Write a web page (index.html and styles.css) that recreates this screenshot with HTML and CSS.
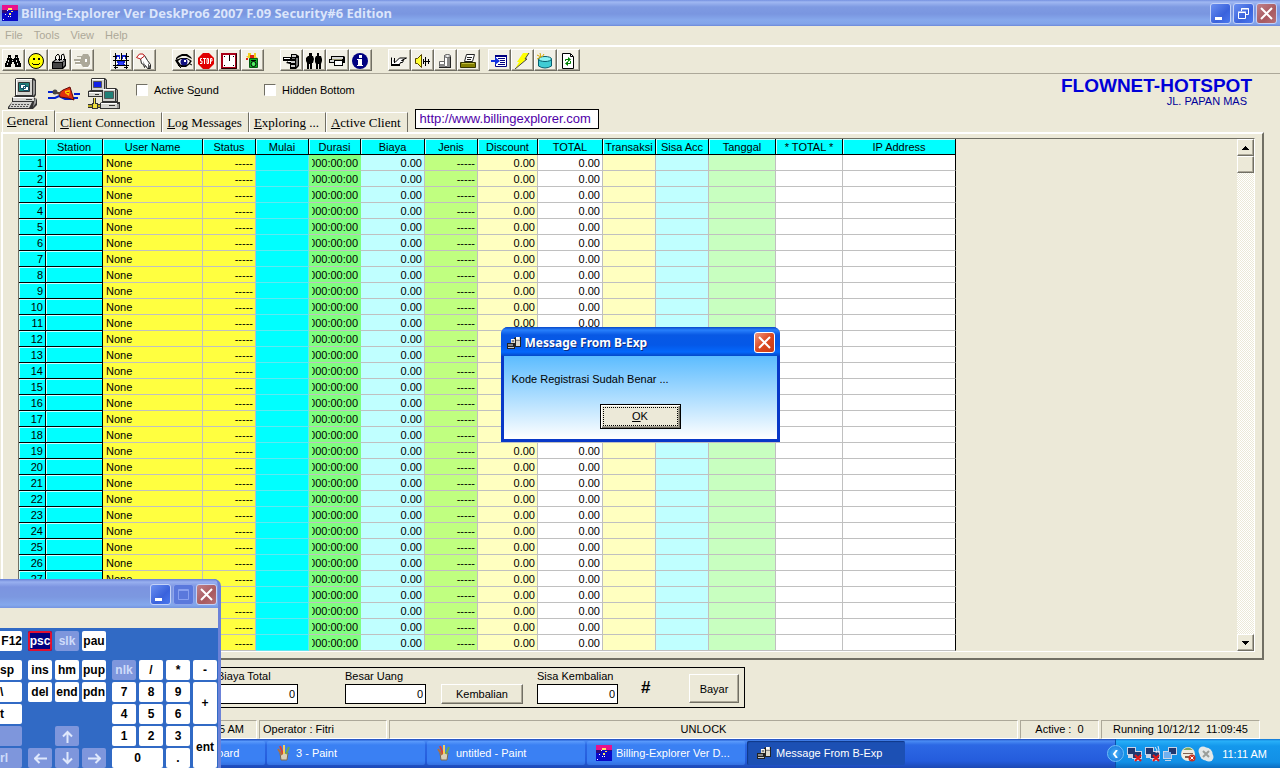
FILE: index.html
```html
<!DOCTYPE html>
<html lang="id">
<head>
    <meta charset="UTF-8">
    <meta name="viewport" content="width=device-width, initial-scale=1.0">
    <title>Billing-Explorer Ver DeskPro6 2007 F.09 Security#6 Edition</title>
    <link rel="stylesheet" href="styles.css">
</head>
<body>
    <svg class="icon-defs" aria-hidden="true">
        <symbol id="i-app" viewBox="0 0 16 16">
            <path fill="#0808c8" d="M0 0h16v16H0z"/>
            <path fill="#e8108c" d="M0 0h16v5H0z"/>
            <path fill="#300878" d="M0 5h5v3H0zM11 5h5v1h-5z"/>
            <path fill="#ffe860" d="M6 3h4v2H6zM9 6h2v1H9zM7 8h2v2H7z"/>
            <path fill="#fff" d="M5 5h1v1H5zM3 9h1v1H3zM6 11h1v1H6zM1 14h1v1H1zM8 11h1v1H8z"/>
        </symbol>
        <symbol id="i-station" viewBox="0 0 16 16">
            <path fill="#222" d="M1 8h7V3l2-1h5v10H9v2H1z"/>
            <path fill="#dcd8cc" d="M10 2h4v9h-4zM5 4h4v4H5z"/>
            <path fill="#888" d="M10 5h4v1h-4zM2 9h5v2H2zM6 5h2v2H6z"/>
            <path fill="#ccc" d="M2 12h6v1H2z"/>
            <path fill="#fff" d="M10 2h3v2h-3zM5 4h3v1H5z"/>
        </symbol>
        <symbol id="i-find" viewBox="0 0 16 16">
            <path d="M3 2h3v3h1v1h2V5h1V2h3v3h1v3h1v2h1v4h-6v-3H9V9H7v2H6v3H0v-4h1V8h1V5h1z"/>
            <path fill="#ddd" d="M4 4h1v1H4zM3 7h1v2H3zM2 10h1v2H2zM11 4h1v1h-1zM11 7h1v2h-1zM12 10h1v2h-1zM7 7h1v1H7z"/>
        </symbol>
        <symbol id="i-smile" viewBox="0 0 16 16">
            <circle cx="8" cy="8" r="7.500" fill="#ff0" stroke="#000"/>
            <path d="M5 5h2v2H5zM10 5h2v2h-2zM4 10h1v1H4zM5 11h6v1H5zM11 10h1v1h-1z"/>
        </symbol>
        <symbol id="i-lock" viewBox="0 0 16 16">
            <path d="M1 9l4-3h10v7l-3 3H1z"/>
            <path fill="#a8a8a8" d="M5 7h9l-3 2H3z"/>
            <path fill="#444" d="M2 10h9v5H2z"/>
            <path fill="#777" d="M12 9l2-1v4l-2 2z"/>
            <path d="M4.500 7V3.500L7 1l1.500 2v5M10.500 7V2l2-1 1 3v3" fill="none" stroke="#000"/>
            <path fill="#fff" d="M6 4h1v3H6zM11 3h1v4h-1z"/>
        </symbol>
        <symbol id="i-key" viewBox="0 0 16 16">
            <path fill="#fff" d="M10 2h5l2 3v8l-3 2h-4l-2-3H2V6h6z"/>
            <path fill="#aca899" d="M9 1h5l2 3v7l-2 3H9l-2-3H1V9h5V8H0V6h7V4H3V3h5zM11 6v3h2V6z" fill-rule="evenodd"/>
        </symbol>
        <symbol id="i-net" viewBox="0 0 16 16">
            <path fill="#1020d0" d="M3 2h4v4H3zM9 2h4v4H9zM4 7h8v6H4z"/>
            <path stroke="#000" fill="none" d="M0 3.500h4M12 3.500h4M0 7.500h16M0 12.500h16M2.500 0v16M13.500 0v16M8.500 0v8M1 14.500h4M11 14.500h4"/>
            <path fill="#fff" d="M4 4h2v2H4zM10 4h2v2h-2zM3 10h2v1H3zM11 10h2v1h-2z"/>
            <path fill="#2c3cff" d="M6 9h4v3H6z"/>
        </symbol>
        <symbol id="i-hand" viewBox="0 0 16 16">
            <path d="M4.500 5.500l4-3 3 5 3 4v4h-3l-2-3-1 2-1-3-2-1z" fill="#fff" stroke="#222"/>
            <path d="M12 10l3 5h-3zM7 8l2 4-1 1z" fill="#555"/>
            <path d="M.5 4.500l3-3.500H7l1.500 2-4 3z" fill="#fff" stroke="#c01818"/>
        </symbol>
        <symbol id="i-eye" viewBox="0 0 18 16">
            <path d="M1 5l2-2 4-2h5l4 3 1 2-2-1-4-2H7L3 5l-2 2z"/>
            <path d="M0 7l6-2h6l5 3-1 1-1 2-4 3H6l-3-2-2-3z"/>
            <path fill="#fff" d="M3 8l3-2h6l3 2-2 3-3 1H6z"/>
            <circle cx="9" cy="9" r="3.500" fill="#101080"/>
            <path fill="#fff" d="M9 7h2v2H9z"/>
            <path d="M3 12l3 3M15 11l2 1" stroke="#000"/>
        </symbol>
        <symbol id="i-stop" viewBox="0 0 16 16">
            <path fill="#e00000" d="M5 0h6l5 5v6l-5 5H5l-5-5V5z"/>
            <path fill="none" stroke="#fff" d="M4 5.500H2.500v2.500H4v2.500H2M5 5.500h3M6.500 5.500V11M9 5.500h1.500v5H9zM12.500 11V5.500H14V8h-1"/>
        </symbol>
        <symbol id="i-clock" viewBox="0 0 16 16">
            <path fill="#fff" stroke="#a80018" stroke-width="2" d="M1 1h14v14H1z"/>
            <path d="M8.500 2v6" stroke="#000"/>
            <path fill="#000" d="M3 3h1v1H3zM12 3h1v1h-1zM3 12h1v1H3zM12 12h1v1h-1z"/>
            <path fill="none" stroke="#200" d="M.5 15.500h15V.5"/>
        </symbol>
        <symbol id="i-light" viewBox="0 0 16 16">
            <path fill="#10b020" stroke="#065a10" d="M5.500 5.500h8v9h-8z"/>
            <path fill="#f0d020" d="M4 0h3v2h3V0h2v4l2 1H4L2 3h2z"/>
            <path fill="#e02010" d="M6 2h4v3H6zM2 5h2v2H2z"/>
            <circle cx="9.500" cy="11" r="2.500" fill="#50f060" stroke="#000"/>
            <path d="M7 7h5v1H7z"/>
        </symbol>
        <symbol id="i-cabinet" viewBox="0 0 16 16">
            <path d="M8 1h5l3 2v10l-3 3H7v-5l-4-1 2-2H0V4h8z"/>
            <path fill="#ccc" d="M9 2h4v2H9zM8 12h4v2H8zM8 8h4v2H8z"/>
            <path fill="#fff" d="M1 5h6v1H1zM5 8h3v1H5z"/>
            <path fill="#777" d="M13 5h2v7l-2 2zM9 5h3v1H9z"/>
        </symbol>
        <symbol id="i-people" viewBox="0 0 16 16">
            <path d="M3 0h3v3h1l1 3-1 4H6v6H4v-5H3v5H1v-6L0 8V5l2-2h1zM11 0h2v3h2l1 3v2l-1 3v5h-2v-5h-1v5h-2v-5L9 9V5l1-2h1z"/>
        </symbol>
        <symbol id="i-printer" viewBox="0 0 16 16">
            <path d="M2 3h13l1 1v6h-2v3H5v-3H0V6h2z"/>
            <path fill="#d8d8d8" d="M3 4h11v2H3zM1 7h4v2H1z"/>
            <path fill="#fff" d="M6 8h7v4H6z"/>
            <path fill="#999970" d="M3 6h10v1H3z"/>
        </symbol>
        <symbol id="i-info" viewBox="0 0 16 16">
            <circle cx="8" cy="8" r="8" fill="#000080"/>
            <path fill="#fff" d="M7 2h3v3H7zM6 6h4v6h1v1H5v-1h1V7H5V6z"/>
        </symbol>
        <symbol id="i-point" viewBox="0 0 16 16">
            <path fill="#fff" stroke="#000" d="M.5 4.500v7h8l1-2h2l1-2h-2l5-2.500h-7l-4 4-2-1"/>
            <path d="M0 11h9v2H0zM3 5h1v5H3z"/>
        </symbol>
        <symbol id="i-sound" viewBox="0 0 16 16">
            <path fill="#ffff30" stroke="#554400" d="M1.500 5.500h2l4-4v13l-4-4h-2z"/>
            <path d="M9.500 6v5M11.500 4v9M14.500 6v5M9 8.500h7" stroke="#000"/>
        </symbol>
        <symbol id="i-bin" viewBox="0 0 16 16">
            <path fill="#fff" stroke="#666" d="M7.500 2.500h5v11h-5zM2.500 8.500h5v5h-5z"/>
            <path fill="#888" d="M10 5h3v9h-3zM3 11h5v3H3z"/>
            <path fill="#222" d="M13 3h1v12H2v-1h11z"/>
            <ellipse cx="10.500" cy="3" rx="3" ry="1.500" fill="#eee" stroke="#555"/>
        </symbol>
        <symbol id="i-tray" viewBox="0 0 16 16">
            <path fill="#fff" stroke="#222" d="M6.500 1.500h8l-2 7h-8z"/>
            <path d="M7 4.500h5M7 6.500h4" stroke="#222"/>
            <path fill="#848000" stroke="#333300" d="M.5 9.500h15v5H.5z"/>
            <path fill="#c0bc40" d="M2 10h12v1H2z"/>
        </symbol>
        <symbol id="i-list" viewBox="0 0 16 16">
            <path fill="#fff" stroke="#000080" d="M4.500 2.500h11v11h-11z"/>
            <path fill="#000080" d="M4 2h12v2H4zM7 5h7v1H7zM9 7h5v1H9zM9 9h5v1H9zM7 11h7v1H7z"/>
            <path fill="#1030e0" d="M0 7h4V4l5 4-5 4V9H0z"/>
        </symbol>
        <symbol id="i-bolt" viewBox="0 0 16 16">
            <path fill="#ff0" d="M9 0h6l-4 6h2L1 16l4-7H3z"/>
            <path d="M15 0l-4 6h2L1 16" fill="none" stroke="#444"/>
        </symbol>
        <symbol id="i-db" viewBox="0 0 16 16">
            <path fill="#40ccd4" stroke="#086070" d="M1.500 6v7q6.500 4 13 0V6z"/>
            <ellipse cx="8" cy="6" rx="6.500" ry="2.500" fill="#90f4f4" stroke="#086070"/>
            <path d="M0 2l4 2M3 0l1 4M7 1L5 4M0 6l4-2" stroke="#d8a800"/>
        </symbol>
        <symbol id="i-reload" viewBox="0 0 16 16">
            <path fill="#fff" stroke="#000" d="M2.500.5h8l3 3v12h-11z"/>
            <path d="M10.500 1v2.500H13" fill="none" stroke="#000"/>
            <path d="M5.500 8V6.500H9M10.500 8v2.500H7" fill="none" stroke="#008000"/>
            <path fill="#008000" d="M8 4l3 2.500L8 9zM8 8v5l-3-2.500z"/>
        </symbol>
        <symbol id="i-pc" viewBox="0 0 32 32">
            <path fill="#333" d="M7 1l2-1h17l2 2v15l-2 3h2l1 2v5l-4 4H0v-2l4-5v-4l3-2z"/>
            <path fill="#d4d4d0" d="M8 2h16v15H8zM5 19h21v4H5zM4 24h20l-3 6H1z"/>
            <path fill="#9a9a98" d="M25 2l2 1v13l-2 2zM27 20h1v5l-3 4z"/>
            <path fill="#fff" d="M8 1h16v1H8zM5 19h20v1H5zM8 2h1v15H8z"/>
            <path fill="#208078" stroke="#333" d="M10.500 4.500h11v9h-11z"/>
            <path fill="#fff" stroke="#105068" d="M12.500 6.500h5v4h-5zM15.500 8.500h5v4h-5z"/>
            <path fill="#444" d="M18 21h6v1h-6z"/>
            <path stroke="#555" stroke-dasharray="2 1" d="M4 26.500h17M3 28.500h17"/>
        </symbol>
        <symbol id="i-hero" viewBox="0 0 32 16">
            <path fill="none" stroke="#0020d0" stroke-width="2" d="M0 6h6M0 12h7l4-2 6 3h6l3-1h4M26 8h6"/>
            <path fill="#e03010" stroke="#600808" d="M11 7l4-3 7-3 4 13-6-2-8-1z"/>
            <path fill="#ffc800" d="M17 5l5-1-1 6-4-3z"/>
            <path fill="#d82000" d="M18 6h3v1h-2z"/>
            <circle cx="7" cy="6" r="2.500" fill="#444"/>
            <path fill="#604030" d="M9 6h4l-1 3-3-1z"/>
        </symbol>
        <symbol id="i-pcs" viewBox="0 0 32 32">
            <path fill="#333" d="M3 1l1-1h13l2 2v10h2v7H0v-6l3-1zM14 11l1-1h13l2 2v12h2v7H12v-6l2-1z"/>
            <path fill="#d4d4d0" d="M4 1h12v11H4zM1 14h13v4H1zM15 11h12v12H15zM13 25h16v5H13z"/>
            <path fill="#fff" d="M4 1h12v1H4zM1 14h12v1H1zM15 11h12v1H15zM13 25h16v1H13z"/>
            <path fill="#9a9a98" d="M17 2h1v9h-1zM28 12h1v11h-1zM29 26h2v4h-2z"/>
            <path fill="#1020e8" stroke="#555" d="M5.500 3.500h8v6h-8z"/>
            <path fill="#208078" stroke="#555" d="M16.500 13.500h9v7h-9z"/>
            <path fill="#333" d="M21 27h6v1h-6zM7 16h4v1H7z"/>
            <path stroke="#333" stroke-width="3" d="M6.500 20v7"/>
            <path fill="#333" d="M0 26h4v-1h6v1h2v4h-2v1H4v-1H0z"/>
            <path fill="#f0e040" d="M6 20h1v6H6zM5 26h4v4H5z"/>
            <path fill="#b8a820" d="M0 27h4v2H0zM10 27h2v2h-2z"/>
        </symbol>
        <symbol id="i-paint" viewBox="0 0 16 16">
            <path fill="#d8d0b8" stroke="#7a6a50" d="M4 8h8l-1 7H5z"/>
            <path stroke="#e04030" stroke-width="2" d="M4 1l3 8"/>
            <path stroke="#f0d060" stroke-width="2" d="M8 0v9"/>
            <path stroke="#70a850" stroke-width="2" d="M13 2l-3 7"/>
            <path stroke="#b07040" stroke-width="2" d="M2 4l4 6"/>
        </symbol>
        <symbol id="i-traynet" viewBox="0 0 16 16">
            <path fill="#c8d4e8" d="M1 1h9v8H1zM6 5h10v8H6z"/>
            <path fill="#203870" d="M2 2h7v6H2zM7 6h8v6H7z"/>
            <path fill="#c8d4e8" d="M8 13h6v2H8zM2 9h4v3H2z"/>
        </symbol>
        <symbol id="i-cross" viewBox="0 0 16 16">
            <path d="M9 9l6 6M15 9l-6 6" stroke="#e01818" stroke-width="2"/>
        </symbol>
    </svg>

    <header class="titlebar">
        <svg class="icon16"><use href="#i-app"/></svg>
        <h1>Billing-Explorer Ver DeskPro6 2007 F.09 Security#6 Edition</h1>
        <div class="win-buttons">
            <button type="button" class="win-btn" aria-label="Minimize"><svg viewBox="0 0 19 19"><path fill="#fff" d="M4 13h7v3H4z"/></svg></button>
            <button type="button" class="win-btn" aria-label="Restore"><svg viewBox="0 0 19 19"><path fill="none" stroke="#fff" d="M7.500 7V4.500h7v6H12M4.500 8.500h7v6h-7zM4 8h8M7 5h8"/></svg></button>
            <button type="button" class="win-btn close" aria-label="Close"><svg viewBox="0 0 19 19"><path stroke="#fff" stroke-width="2" d="M4 4l11 11M15 4L4 15"/></svg></button>
        </div>
    </header>

    <nav class="menubar">
        <a href="#">File</a>
        <a href="#">Tools</a>
        <a href="#">View</a>
        <a href="#">Help</a>
    </nav>

    <div class="toolbar">
        <div class="tool-group">
            <button type="button" aria-label="Find"><svg><use href="#i-find"/></svg></button>
            <button type="button" aria-label="User"><svg><use href="#i-smile"/></svg></button>
            <button type="button" aria-label="Lock"><svg><use href="#i-lock"/></svg></button>
            <button type="button" aria-label="Key" disabled><svg><use href="#i-key"/></svg></button>
        </div>
        <div class="tool-group">
            <button type="button" aria-label="Network"><svg><use href="#i-net"/></svg></button>
            <button type="button" aria-label="Select"><svg><use href="#i-hand"/></svg></button>
        </div>
        <div class="tool-group">
            <button type="button" aria-label="Monitor"><svg class="wide"><use href="#i-eye"/></svg></button>
            <button type="button" aria-label="Stop"><svg><use href="#i-stop"/></svg></button>
            <button type="button" aria-label="Time"><svg><use href="#i-clock"/></svg></button>
            <button type="button" aria-label="Traffic"><svg><use href="#i-light"/></svg></button>
        </div>
        <div class="tool-group">
            <button type="button" aria-label="Cabinet"><svg><use href="#i-cabinet"/></svg></button>
            <button type="button" aria-label="Members"><svg><use href="#i-people"/></svg></button>
            <button type="button" aria-label="Print"><svg><use href="#i-printer"/></svg></button>
            <button type="button" aria-label="Info"><svg><use href="#i-info"/></svg></button>
        </div>
        <div class="tool-group">
            <button type="button" aria-label="Point"><svg><use href="#i-point"/></svg></button>
            <button type="button" aria-label="Sound"><svg><use href="#i-sound"/></svg></button>
            <button type="button" aria-label="Storage"><svg><use href="#i-bin"/></svg></button>
            <button type="button" aria-label="Documents"><svg><use href="#i-tray"/></svg></button>
        </div>
        <div class="tool-group">
            <button type="button" aria-label="List"><svg><use href="#i-list"/></svg></button>
            <button type="button" aria-label="Quick"><svg><use href="#i-bolt"/></svg></button>
            <button type="button" aria-label="Database"><svg><use href="#i-db"/></svg></button>
            <button type="button" aria-label="Refresh"><svg><use href="#i-reload"/></svg></button>
        </div>
    </div>

    <div class="infobar">
        <div class="big-icons">
            <svg class="icon32"><use href="#i-pc"/></svg>
            <svg class="icon-hero"><use href="#i-hero"/></svg>
            <svg class="icon32"><use href="#i-pcs"/></svg>
        </div>
        <label class="check"><input type="checkbox"><span>Active S<u>o</u>und</span></label>
        <label class="check"><input type="checkbox"><span>Hidden Bottom</span></label>
        <div class="brand">
            <h2>FLOWNET-HOTSPOT</h2>
            <p>JL. PAPAN MAS</p>
        </div>
    </div>

    <div class="tabs">
        <button type="button" class="tab active"><u>G</u>eneral</button>
        <button type="button" class="tab"><u>C</u>lient Connection</button>
        <button type="button" class="tab"><u>L</u>og Messages</button>
        <button type="button" class="tab"><u>E</u>xploring ...</button>
        <button type="button" class="tab"><u>A</u>ctive Client</button>
        <a class="site-link" href="#">http://www.billingexplorer.com</a>
    </div>

    <main class="panel">
        <div class="grid-box">
            <table class="billing">
                <colgroup>
                    <col class="w-no"><col class="w-station"><col class="w-user"><col class="w-s"><col class="w-s">
                    <col class="w-durasi"><col class="w-biaya"><col class="w-s"><col class="w-disc"><col class="w-total">
                    <col class="w-s"><col class="w-s"><col class="w-m"><col class="w-m"><col class="w-ip">
                </colgroup>
                <thead>
                    <tr>
                        <th></th><th>Station</th><th>User Name</th><th>Status</th><th>Mulai</th>
                        <th>Durasi</th><th>Biaya</th><th>Jenis</th><th>Discount</th><th>TOTAL</th>
                        <th>Transaksi</th><th>Sisa Acc</th><th>Tanggal</th><th>* TOTAL *</th><th>IP Address</th>
                    </tr>
                </thead>
                <tbody id="rows"></tbody>
            </table>
            <div class="scrollbar">
                <button type="button" class="scroll-btn" aria-label="Scroll up"><svg viewBox="0 0 7 4"><path d="M3 0h1v1h1v1h1v1h1v1H0V3h1V2h1V1h1z"/></svg></button>
                <div class="scroll-thumb"></div>
                <button type="button" class="scroll-btn down" aria-label="Scroll down"><svg viewBox="0 0 7 4"><path d="M0 0h7v1H6v1H5v1H4v1H3V3H2V2H1V1H0z"/></svg></button>
            </div>
        </div>
    </main>

    <form class="payment">
        <div class="field">
            <label for="biaya">Biaya Total</label>
            <input type="text" id="biaya" value="0">
        </div>
        <div class="field uang">
            <label for="uang">Besar Uang</label>
            <input type="text" id="uang" value="0">
        </div>
        <button type="button" class="btn kembalian">Kembalian</button>
        <div class="field">
            <label for="sisa">Sisa Kembalian</label>
            <input type="text" id="sisa" value="0">
        </div>
        <span class="hash">#</span>
        <button type="button" class="btn bayar">Bayar</button>
    </form>

    <footer class="statusbar">
        <span class="st-time">11:09:45 AM</span>
        <span class="st-op">Operator : Fitri</span>
        <span class="st-main">UNLOCK</span>
        <span class="st-active">Active :&nbsp; 0</span>
        <span class="st-run">Running 10/12/12&nbsp; 11:09:45</span>
    </footer>

    <div class="taskbar">
        <button type="button" class="task"><svg class="icon16"><use href="#i-station"/></svg><span>On-Screen Keyboard</span></button>
        <button type="button" class="task"><svg class="icon16"><use href="#i-paint"/></svg><span>3 - Paint</span></button>
        <button type="button" class="task"><svg class="icon16"><use href="#i-paint"/></svg><span>untitled - Paint</span></button>
        <button type="button" class="task"><svg class="icon16"><use href="#i-app"/></svg><span>Billing-Explorer Ver D...</span></button>
        <button type="button" class="task current"><svg class="icon16"><use href="#i-station"/></svg><span>Message From B-Exp</span></button>
        <div class="tray">
            <button type="button" class="tray-toggle" aria-label="Show hidden icons"><svg viewBox="0 0 8 8"><path fill="none" stroke="#fff" stroke-width="2" d="M5 0L2 4l3 4"/></svg></button>
            <svg class="icon16"><use href="#i-traynet"/><use href="#i-cross"/></svg>
            <svg class="icon16"><use href="#i-traynet"/><path d="M11 1l2 3-1 3M14 0l1 4-1 3" fill="none" stroke="#dde8f8"/><use href="#i-cross"/></svg>
            <svg class="icon16" viewBox="0 0 16 16"><path fill="#c8d4e8" d="M6 1h9v8H6zM1 5h9v8H1zM3 14h6v1H3z"/><path fill="#203870" d="M7 2h7v6H7z"/><path fill="#70b0f0" d="M2 6h7v6H2z"/></svg>
            <svg class="icon16" viewBox="0 0 16 16"><circle cx="8" cy="8" r="7" fill="#f0ece0"/><path fill="#80a860" d="M3 4q5-5 10 0z"/><path fill="#806050" d="M3 7h10v1H3zM5 10h4v2H5z"/><circle cx="12" cy="12" r="3.500" fill="#c83020"/><path stroke="#fff" d="M10.500 10.500l3 3M13.500 10.500l-3 3"/></svg>
            <svg class="icon16" viewBox="0 0 16 16"><circle cx="5" cy="5" r="4.500" fill="#e4e8e8"/><circle cx="11" cy="11" r="4.500" fill="#e4e8e8"/><circle cx="8" cy="8" r="6.500" fill="#e4e8e8"/><path stroke="#9a9e9a" stroke-width="2" d="M5 5l6 6M11 5l-6 6"/></svg>
            <span class="clock">11:11 AM</span>
        </div>
    </div>

    <section class="dialog" role="dialog" aria-labelledby="dialogTitle">
        <div class="dialog-title">
            <svg class="icon16"><use href="#i-station"/></svg>
            <h2 id="dialogTitle">Message From B-Exp</h2>
            <button type="button" class="win-btn close" aria-label="Close"><svg viewBox="0 0 19 19"><path stroke="#fff" stroke-width="2" d="M4 4l11 11M15 4L4 15"/></svg></button>
        </div>
        <div class="dialog-body">
            <p>Kode Registrasi Sudah Benar ...</p>
            <button type="button" class="ok-btn"><span><u>O</u>K</span></button>
        </div>
    </section>

    <section class="keyboard" aria-label="Keyboard">
        <div class="keyboard-title">
            <button type="button" class="win-btn" aria-label="Minimize"><svg viewBox="0 0 19 19"><path fill="#fff" d="M4 13h7v3H4z"/></svg></button>
            <button type="button" class="win-btn off" aria-label="Maximize" disabled><svg viewBox="0 0 19 19"><path fill="none" stroke="#88a0f0" d="M4.500 4.500h10v10h-10zM4 5.500h11"/></svg></button>
            <button type="button" class="win-btn close" aria-label="Close"><svg viewBox="0 0 19 19"><path stroke="#fff" stroke-width="2" d="M4 4l11 11M15 4L4 15"/></svg></button>
        </div>
        <div class="keyboard-menu"></div>
        <div class="keys">
            <div class="key-block edge">
                <button type="button" class="right">F12</button>
                <button type="button">sp</button>
                <button type="button">\</button>
                <button type="button">t</button>
                <button type="button" class="mod" aria-label="Shift"></button>
                <button type="button" class="mod">rl</button>
            </div>
            <div class="key-block nav">
                <button type="button" class="hot">psc</button>
                <button type="button" class="mod">slk</button>
                <button type="button">pau</button>
                <button type="button">ins</button>
                <button type="button">hm</button>
                <button type="button">pup</button>
                <button type="button">del</button>
                <button type="button">end</button>
                <button type="button">pdn</button>
                <button type="button" class="mod up" aria-label="Up"><svg viewBox="0 0 13 13"><path d="M6.500 13V2M2 6.500L6.500 2 11 6.500"/></svg></button>
                <button type="button" class="mod arrow" aria-label="Left"><svg viewBox="0 0 13 13"><path d="M13 6.500H1M5.500 2L1 6.500 5.500 11"/></svg></button>
                <button type="button" class="mod arrow" aria-label="Down"><svg viewBox="0 0 13 13"><path d="M6.500 0v11M2 6.500L6.500 11 11 6.500"/></svg></button>
                <button type="button" class="mod arrow" aria-label="Right"><svg viewBox="0 0 13 13"><path d="M0 6.500h12M7.500 2L12 6.500 7.500 11"/></svg></button>
            </div>
            <div class="key-block num">
                <button type="button" class="mod">nlk</button>
                <button type="button">/</button>
                <button type="button">*</button>
                <button type="button">-</button>
                <button type="button">7</button>
                <button type="button">8</button>
                <button type="button">9</button>
                <button type="button" class="tall">+</button>
                <button type="button">4</button>
                <button type="button">5</button>
                <button type="button">6</button>
                <button type="button">1</button>
                <button type="button">2</button>
                <button type="button">3</button>
                <button type="button" class="tall">ent</button>
                <button type="button" class="double">0</button>
                <button type="button">.</button>
            </div>
        </div>
    </section>

    <script src="script.js"></script>
</body>
</html>
```
FILE: styles.css
```css
:root {
    --face: #ece9d8;
    --shadow: #aca899;
    --dark: #716f64;
    --line: #c0c0c0;
    --cyan: #00ffff;
    --task: #3a80f3;
}

* {
    margin: 0;
    padding: 0;
    box-sizing: border-box;
}

body {
    height: 100vh;
    display: flex;
    flex-direction: column;
    position: relative;
    overflow: hidden;
    background-color: var(--face);
    color: #000;
    font-family: "Liberation Sans", Arial, sans-serif;
    font-size: 11px;
    line-height: 14px;
}

button,
input {
    font: inherit;
    color: inherit;
}

button {
    border: none;
    background: none;
}

a {
    color: inherit;
    text-decoration: none;
}

svg {
    display: block;
    flex: none;
}

.icon-defs {
    position: absolute;
    width: 0;
    height: 0;
}

.icon16 {
    width: 16px;
    height: 16px;
}

/* Window title */
.titlebar {
    height: 26px;
    flex: none;
    display: flex;
    align-items: center;
    padding: 0 3px 0 2px;
    gap: 3px;
    background: linear-gradient(#7591e0 0, #a0b8f2 2px, #7e9ae2 7px, #7a96e0 14px, #86a8ec 20px, #82a4ea 24px, #6c88d8 100%);
}

.titlebar h1 {
    flex: 1;
    font-family: "Noto Sans", sans-serif;
    font-size: 13px;
    font-weight: bold;
    line-height: 16px;
    color: #dbe5fb;
    white-space: nowrap;
}

.win-buttons {
    display: flex;
    gap: 2px;
}

.win-btn {
    width: 21px;
    height: 21px;
    border: 1px solid #c4d2f8;
    border-radius: 3px;
    background: linear-gradient(135deg, #6a8ff0, #3a62dc 60%, #4a78ee);
}

.win-btn svg {
    width: 19px;
    height: 19px;
}

.win-btn.close {
    background: linear-gradient(135deg, #c08088, #a85a60 60%, #b87078);
}

.win-btn.off {
    border-color: #8ea4ec;
    background: #5a78dc;
}

/* Menu */
.menubar {
    height: 19px;
    flex: none;
    display: flex;
    align-items: center;
    gap: 11px;
    padding: 0 0 2px 5px;
    color: var(--shadow);
}

/* Toolbar */
.toolbar {
    flex: none;
    display: flex;
    height: 29px;
    padding: 2px 0 0 2px;
    border-top: 2px solid #fff;
    border-bottom: 1px solid var(--shadow);
}

.tool-group {
    display: flex;
    margin-right: 16px;
}

.tool-group:nth-child(5) {
    margin-right: 8px;
}

.tool-group button {
    width: 23px;
    height: 22px;
    padding: 2px 2px 1px;
    border: 1px solid;
    border-color: #fff var(--dark) var(--dark) #fff;
    background-color: #f2f0e6;
    box-shadow: inset -1px -1px 0 var(--shadow);
}

.tool-group svg {
    width: 16px;
    height: 16px;
}

.tool-group svg.wide {
    width: 18px;
}

/* Station icons and options */
.infobar {
    height: 35px;
    flex: none;
    display: flex;
    align-items: flex-start;
    padding: 2px 28px 0 8px;
}

.big-icons {
    display: flex;
    align-items: center;
    gap: 8px;
    padding-top: 2px;
    width: 128px;
}

.icon32 {
    width: 32px;
    height: 32px;
}

.icon-hero {
    width: 32px;
    height: 16px;
}

.check {
    display: flex;
    align-items: center;
    gap: 6px;
    width: 128px;
    padding-top: 7px;
}

.check input {
    appearance: none;
    width: 12px;
    height: 12px;
    background-color: #fff;
    border: 1px solid;
    border-color: var(--dark) #fff #fff var(--dark);
}

.brand {
    flex: 1;
    text-align: right;
}

.brand h2 {
    font-size: 19px;
    line-height: 20px;
    color: #0000d8;
}

.brand p {
    padding-right: 5px;
    line-height: 11px;
    color: #000098;
}

/* Tabs */
.tabs {
    flex: none;
    display: flex;
    align-items: flex-end;
    height: 23px;
    padding-left: 2px;
    font-family: "Liberation Serif", "Times New Roman", serif;
    font-size: 13px;
    line-height: 18px;
}

.tab {
    height: 20px;
    padding: 1px 6px 0 4px;
    border-top: 1px solid #fff;
    border-right: 1px solid var(--dark);
    border-left: 1px solid #fff;
    white-space: nowrap;
}

.tab.active {
    height: 22px;
    padding-bottom: 3px;
}

.site-link {
    align-self: flex-start;
    height: 20px;
    margin-left: 7px;
    padding: 0 7px 0 4px;
    border: 1px solid #000;
    background-color: #fff;
    color: #5000a8;
    font-family: "Liberation Sans", Arial, sans-serif;
    line-height: 17px;
}

/* Billing grid */
.panel {
    flex: 1;
    min-height: 0;
    margin: 0 16px 0 1px;
    padding: 4px 7px 6px 15px;
    border: 2px solid;
    border-color: #fff var(--dark) var(--dark) #fff;
}

.grid-box {
    height: 100%;
    display: flex;
    justify-content: space-between;
    overflow: hidden;
    border: 1px solid;
    border-color: var(--dark) #fff #fff var(--dark);
}

.billing {
    flex: none;
    align-self: flex-start;
    width: 937px;
    table-layout: fixed;
    border-collapse: separate;
    border-spacing: 0;
    line-height: 13px;
}

.w-no { width: 27px; }
.w-station { width: 57px; }
.w-user { width: 100px; }
.w-s { width: 53px; }
.w-durasi { width: 52px; }
.w-biaya { width: 64px; }
.w-disc { width: 60px; }
.w-total { width: 65px; }
.w-m { width: 67px; }
.w-ip { width: 113px; }

.billing th,
.billing td {
    height: 16px;
    padding: 2px 2px 0 3px;
    font-weight: normal;
    overflow: hidden;
    white-space: nowrap;
}

.billing th {
    padding: 2px 0 0;
    background-color: var(--cyan);
    border-right: 1px solid #000;
    border-bottom: 1px solid #000;
    box-shadow: inset 1px 1px 0 #c8ffff;
}

.billing td {
    border-right: 1px solid var(--line);
    border-bottom: 1px solid var(--line);
    background-color: #fff;
    text-align: right;
}

.billing tbody th {
    padding-right: 2px;
    text-align: right;
}

.billing .user,
.billing .status {
    background-color: #ffff40;
}

.billing .user {
    text-align: left;
}

.billing .mulai {
    background-color: var(--cyan);
    border-color: #60e8f0;
}

.billing .durasi {
    background-color: #80ff80;
    border-right-color: #80ff80;
}

.durasi div {
    display: flex;
    justify-content: flex-end;
    width: 46px;
    overflow: hidden;
}

.billing .biaya,
.billing .sisa {
    background-color: #c0ffff;
}

.billing .jenis {
    background-color: #c0ff80;
}

.billing .disc,
.billing .trans {
    background-color: #ffffc0;
}

.billing .tanggal {
    background-color: #c8ffc0;
}

.billing .ip {
    border-right-color: #000;
}

.scrollbar {
    width: 17px;
    display: flex;
    flex-direction: column;
    background: repeating-conic-gradient(#fff 0 25%, var(--face) 0 50%) 0 0 / 2px 2px;
}

.scroll-btn,
.scroll-thumb {
    height: 17px;
    flex: none;
    display: flex;
    align-items: center;
    justify-content: center;
    background-color: var(--face);
    border: 1px solid;
    border-color: #fff var(--dark) var(--dark) #fff;
    box-shadow: inset -1px -1px 0 var(--shadow);
}

.scroll-btn svg {
    width: 7px;
    height: 4px;
}

.scroll-btn.down {
    margin-top: auto;
}

/* Payment */
.payment {
    flex: none;
    display: flex;
    align-items: flex-start;
    width: 727px;
    height: 41px;
    margin: 7px 0 0 18px;
    padding-left: 198px;
    border: 1px solid #000;
}

.field {
    display: flex;
    flex-direction: column;
    width: 81px;
}

.field.uang {
    margin-left: 47px;
}

.field label {
    line-height: 16px;
}

.field input {
    width: 100%;
    height: 20px;
    padding: 0 2px;
    border: 1px solid #000;
    background-color: #fff;
    text-align: right;
}

.btn {
    border: 1px solid;
    border-color: #fff var(--dark) var(--dark) #fff;
    box-shadow: inset -1px -1px 0 var(--shadow);
}

.btn.kembalian {
    width: 82px;
    height: 20px;
    margin: 16px 14px 0 15px;
}

.hash {
    width: 56px;
    margin-left: 15px;
    padding: 10px 0 0 8px;
    font-size: 17px;
    font-weight: bold;
    line-height: 20px;
}

.btn.bayar {
    width: 50px;
    height: 29px;
    margin-top: 6px;
}

/* Status bar */
.statusbar {
    flex: none;
    display: flex;
    gap: 2px;
    height: 19px;
    margin: 12px 20px 0 18px;
    line-height: 17px;
    white-space: pre;
}

.statusbar span {
    border: 1px solid;
    border-color: var(--shadow) #fff #fff var(--shadow);
}

.st-time {
    width: 239px;
    padding-right: 12px;
    text-align: right;
}

.st-op {
    width: 128px;
    padding-left: 3px;
}

.st-main {
    flex: 1;
    text-align: center;
}

.st-active {
    width: 79px;
    text-align: center;
}

.st-run {
    width: 159px;
    text-align: center;
}

/* Taskbar */
.taskbar {
    flex: none;
    display: flex;
    align-items: stretch;
    gap: 2px;
    height: 29px;
    padding-left: 107px;
    background: linear-gradient(#1c46b8 0, #4a8cf4 2px, #2c68e4 6px, #245cdc 22px, #1c48b4 100%);
    color: #fff;
}

.task {
    width: 158px;
    margin: 2px 0 3px;
    display: flex;
    align-items: center;
    gap: 4px;
    padding-left: 9px;
    border-radius: 2px;
    background: linear-gradient(#5c9cfc 0, var(--task) 4px, var(--task) 20px, #3470e0 100%);
    white-space: nowrap;
}

.task.current {
    background: #1c50b4;
    box-shadow: inset 1px 1px 1px #103888;
}

.tray {
    display: flex;
    align-items: center;
    gap: 2px;
    margin-left: auto;
    padding-right: 13px;
    background: linear-gradient(#1070d0 0, #28b0f8 2px, #1498ec 7px, #1290e6 23px, #0c6cc0 100%);
    border-left: 1px solid #0c50a8;
}

.tray-toggle {
    width: 17px;
    height: 17px;
    display: flex;
    align-items: center;
    justify-content: center;
    margin-left: -9px;
    border: 1px solid #70c0f8;
    border-radius: 50%;
    background: radial-gradient(#48b0f8, #1070d8);
}

.tray-toggle svg {
    width: 8px;
    height: 8px;
}

.clock {
    padding-left: 6px;
    white-space: nowrap;
}

/* Message dialog */
.dialog {
    position: absolute;
    inset: 1px 0 0;
    width: 279px;
    height: 115px;
    margin: auto;
    display: flex;
    flex-direction: column;
    border-radius: 7px 7px 0 0;
    background-color: #0838c8;
    padding: 0 3px 3px;
    overflow: hidden;
}

.dialog-title {
    height: 29px;
    display: flex;
    align-items: center;
    gap: 3px;
    margin: 0 -3px;
    padding: 2px 5px 0;
    background: linear-gradient(#0848c8 0, #2880fc 3px, #0858e4 8px, #0458e8 18px, #0468fc 25px, #0448c8 100%);
}

.dialog-title h2 {
    flex: 1;
    font-family: "Noto Sans", sans-serif;
    font-size: 12px;
    line-height: 16px;
    color: #fff;
    text-shadow: 1px 1px #0c2c80;
}

.dialog-title .close {
    border-color: #fff;
    background: linear-gradient(135deg, #f09880, #dc4820 50%, #c83c18);
}

.dialog-body {
    flex: 1;
    display: flex;
    flex-direction: column;
    align-items: center;
    justify-content: space-between;
    padding: 16px 8px 10px;
    background: linear-gradient(#5cbcff, #fff);
}

.dialog-body p {
    align-self: flex-start;
}

.ok-btn {
    width: 81px;
    height: 25px;
    padding: 2px;
    border: 1px solid #000;
    background-color: var(--face);
    box-shadow: inset 1px 1px 0 #fff, inset -1px -1px 0 var(--dark), inset -2px -2px 0 var(--shadow);
}

.ok-btn span {
    display: block;
    border: 1px dotted #000;
    line-height: 17px;
}

/* On-screen keyboard */
.keyboard {
    position: absolute;
    left: 0;
    bottom: 0;
    width: 221px;
    height: 189px;
    display: flex;
    flex-direction: column;
    border-right: 3px solid #6c82d8;
    border-radius: 0 7px 0 0;
    background-color: #316ac5;
    overflow: hidden;
}

.keyboard-title {
    flex: none;
    height: 29px;
    display: flex;
    align-items: center;
    justify-content: flex-end;
    gap: 2px;
    padding: 1px 1px 0 0;
    background: linear-gradient(#6880d4 0, #98b0f0 3px, #7c94e0 8px, #7c98e0 18px, #84a8ec 26px, #7494e0 100%);
}

.keyboard-menu {
    flex: none;
    height: 20px;
    background-color: var(--face);
}

.keys {
    display: flex;
    gap: 6px;
    padding-top: 3px;
    font-size: 12px;
    font-weight: bold;
}

.key-block {
    display: grid;
    grid-auto-rows: 20px;
    align-content: start;
    gap: 2px 3px;
}

.key-block button {
    display: flex;
    align-items: center;
    justify-content: center;
    border-radius: 2px;
    background-color: #fff;
    overflow: hidden;
}

/* The function key row stands apart from the rows below */
.edge,
.nav {
    grid-template-rows: 27px;
}

.edge button:first-child,
.nav button:nth-child(-n+3) {
    height: 20px;
}

.edge {
    grid-template-columns: 22px;
}

.key-block.edge button {
    justify-content: flex-start;
    border-radius: 0 2px 2px 0;
}

.key-block.edge .right {
    justify-content: flex-end;
}

.nav {
    grid-template-columns: repeat(3, 24px);
}

.num {
    grid-template-columns: repeat(4, 24px);
    padding-top: 29px;
}

.key-block .mod {
    background-color: #7e96dc;
    color: #cfdcfa;
}

.key-block .hot {
    background-color: #000080;
    box-shadow: inset 0 0 0 2px #e01030;
    color: #fff;
}

.key-block .up {
    grid-area: 5 / 2;
}

.key-block .arrow {
    grid-row: 6;
}

.key-block .tall {
    grid-row: span 2;
}

.key-block .double {
    grid-column: span 2;
}

.nav svg {
    width: 13px;
    height: 13px;
    fill: none;
    stroke: #dfe8fc;
    stroke-width: 2;
}
```
FILE: script.js
```javascript
// Fill the billing grid, one row per station
const rows = document.getElementById('rows');
const totalStations = 31;

for (let i = 1; i <= totalStations; i++) {
    const tr = document.createElement('tr');
    tr.innerHTML = `
        <th>${i}</th>
        <th></th>
        <td class="user">None</td>
        <td class="status">-----</td>
        <td class="mulai"></td>
        <td class="durasi"><div>000:00:00</div></td>
        <td class="biaya">0.00</td>
        <td class="jenis">-----</td>
        <td class="disc">0.00</td>
        <td>0.00</td>
        <td class="trans"></td>
        <td class="sisa"></td>
        <td class="tanggal"></td>
        <td></td>
        <td class="ip"></td>
    `;
    rows.appendChild(tr);
}
```
